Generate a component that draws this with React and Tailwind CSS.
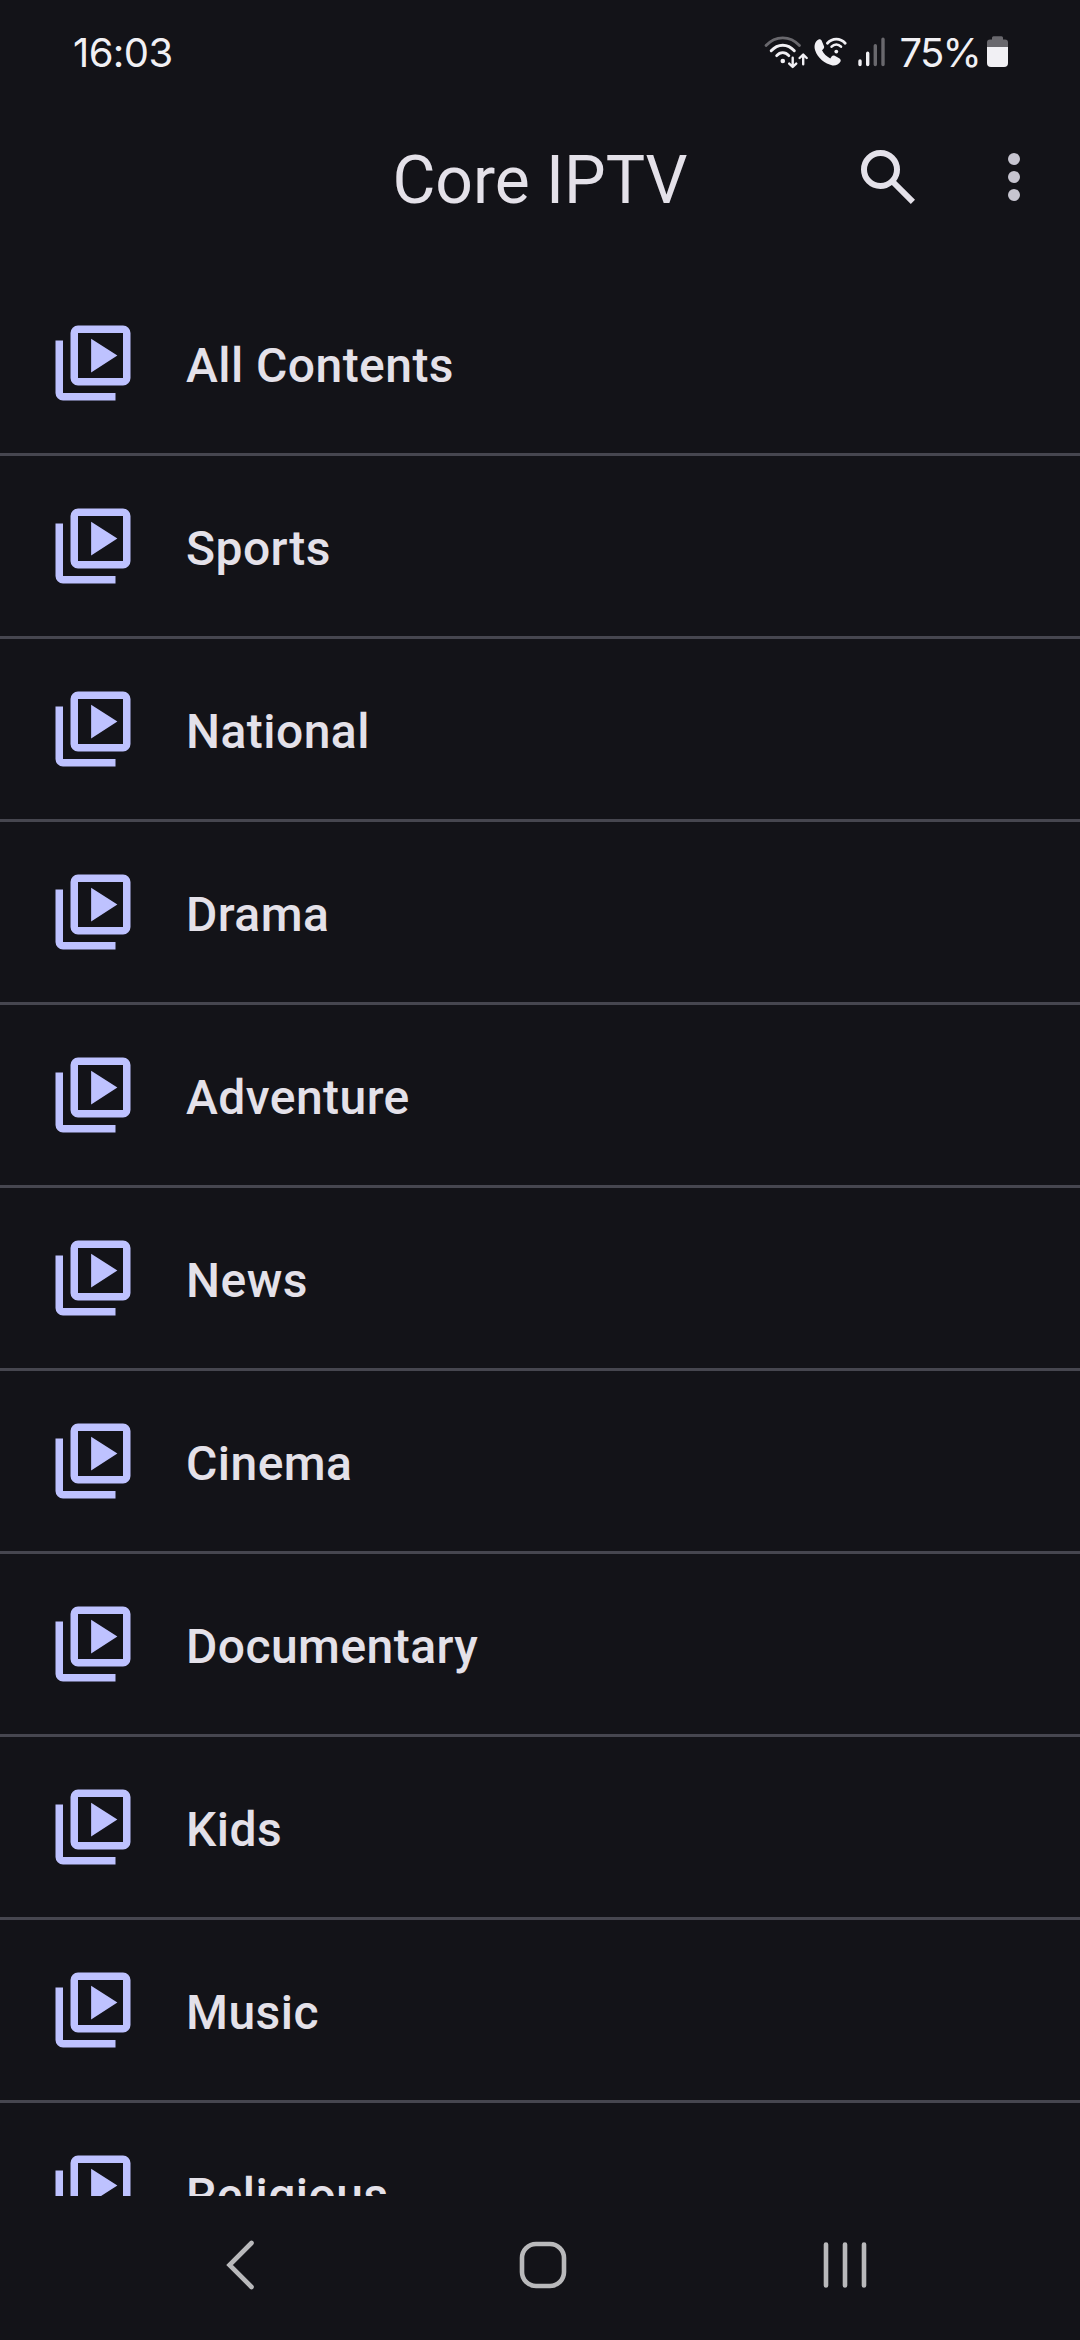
const categories = [
  "All Contents",
  "Sports",
  "National",
  "Drama",
  "Adventure",
  "News",
  "Cinema",
  "Documentary",
  "Kids",
  "Music",
  "Religious",
];

function WifiIcon() {
  return (
    <svg className="h-9 w-11" viewBox="0 0 44 36" fill="none" strokeLinecap="round">
      <path d="M2 10.5C11.5 0.2 26 0.2 35.5 10.5" stroke="#69686d" strokeWidth="2.8" />
      <path d="M7.2 15.8C13.8 8.3 23.7 8.3 30.3 15.8" stroke="#f1f0f4" strokeWidth="2.9" />
      <path d="M12.7 20.6C16.2 16.6 21.3 16.6 24.8 20.6" stroke="#f1f0f4" strokeWidth="2.9" />
      <circle cx="18.8" cy="26" r="2.3" fill="#f1f0f4" />
      <path
        d="M28.7 22.8V31.6M25.2 28.6l3.5 3.4 3.5-3.4M39.2 29.3V20.5M35.6 23l3.6-3.4 3.5 3.4"
        stroke="#f1f0f4"
        strokeWidth="2.4"
        strokeLinejoin="round"
      />
    </svg>
  );
}

function WifiCallIcon() {
  return (
    <svg className="h-9 w-9" viewBox="0 0 36 36" fill="none" strokeLinecap="round">
      <path
        d="M5.6 4.4C2 6.3.6 10.6 2.2 15.6C4.6 22.8 12 29.2 19.5 30.4C22.8 30.8 25.8 29.3 27.4 26.7C28.2 25.3 27.5 24.1 26.2 23.3L21.7 20.8C20.5 20.2 19.4 20.5 18.6 21.6L17.3 23.4C13.6 21.6 10.7 18.9 9 15.3L10.3 14.1C11.2 13.2 11.4 12.2 10.9 11.1L8.6 5.6C8 4.3 6.9 3.8 5.6 4.4Z"
        fill="#f1f0f4"
      />
      <path d="M14.4 8.2C19.3 2.7 27.3 2.7 32.2 8.2" stroke="#f1f0f4" strokeWidth="2.8" />
      <path d="M18.6 11.7C21.3 8.8 25.3 8.8 28 11.7" stroke="#f1f0f4" strokeWidth="2.6" />
      <circle cx="23.3" cy="16.6" r="1.9" fill="#f1f0f4" />
    </svg>
  );
}

function SignalIcon() {
  return (
    <svg className="h-9 w-7" viewBox="0 0 28 36" strokeWidth="3.4" strokeLinecap="round">
      <path d="M2 26v3.5M9.7 18.2v11.3" stroke="#f1f0f4" />
      <path d="M17.3 10.7v18.8M25 4.2v25.3" stroke="#69686d" />
    </svg>
  );
}

function BatteryIcon() {
  return (
    <svg className="h-9 w-[21px]" viewBox="0 0 21 36">
      <path
        d="M6.5 1.2h8q1.5 0 1.5 1.5V4.5h2q3 0 3 3V12H0V7.5q0-3 3-3h2V2.7q0-1.5 1.5-1.5z"
        fill="#69686d"
      />
      <path d="M0 12h21v16q0 4-4 4H4q-4 0-4-4z" fill="#f1f0f4" />
    </svg>
  );
}

function StatusBar() {
  return (
    <header className="flex h-[81px] items-center justify-between pr-[72px] pl-[73px] font-['Inter'] text-[40px] text-[#f1f0f4]">
      <span className="mt-[25px] leading-[48px] tracking-[-0.6px]">16:03</span>
      <div className="mt-[25px] flex items-center">
        <WifiIcon />
        <div className="ml-[5px]">
          <WifiCallIcon />
        </div>
        <div className="ml-[9px]">
          <SignalIcon />
        </div>
        <span className="mr-[7px] ml-[14px] leading-[48px] tracking-[-1.8px]">75%</span>
        <BatteryIcon />
      </div>
    </header>
  );
}

function AppBar() {
  return (
    <div className="grid h-[192px] grid-cols-[1fr_auto_1fr] items-center pr-[30px]">
      <h1 className="col-start-2 ml-[30px] pt-2 text-[66px] leading-[84px] text-[#e4e1e9]">Core IPTV</h1>
      <div className="flex items-center justify-end gap-[54px]">
        <button aria-label="Search">
          <svg className="size-[72px]" viewBox="0 -960 960 960" fill="#e4e1e9">
            <path d="M784-120 532-372q-30 24-69 38t-83 14q-109 0-184.5-75.5T120-580q0-109 75.5-184.5T380-840q109 0 184.5 75.5T640-580q0 44-14 83t-38 69l252 252-56 56ZM380-400q75 0 127.5-52.5T560-580q0-75-52.5-127.5T380-760q-75 0-127.5 52.5T200-580q0 75 52.5 127.5T380-400Z" />
          </svg>
        </button>
        <button aria-label="More options">
          <svg className="size-[72px]" viewBox="0 0 24 24" fill="#c7c5d0">
            <circle cx="12" cy="6" r="2" />
            <circle cx="12" cy="12" r="2" />
            <circle cx="12" cy="18" r="2" />
          </svg>
        </button>
      </div>
    </div>
  );
}

function CategoryRow({ name }) {
  return (
    <li className="flex h-[183px] items-center gap-12 border-b-3 border-[#46464f] px-12">
      <svg className="size-[90px] shrink-0" viewBox="0 -960 960 960" fill="#bec2ff">
        <path d="m460-380 280-180-280-180v360ZM320-240q-33 0-56.5-23.5T240-320v-480q0-33 23.5-56.5T320-880h480q33 0 56.5 23.5T880-800v480q0 33-23.5 56.5T800-240H320Zm0-80h480v-480H320v480ZM160-80q-33 0-56.5-23.5T80-160v-560h80v560h560v80H160Z" />
      </svg>
      <span className="pt-1.5 text-[48px] leading-[72px] font-medium tracking-[0.45px] text-[#e4e1e9]">
        {name}
      </span>
    </li>
  );
}

function NavBar() {
  return (
    <nav className="flex h-36 items-center justify-between pr-[205px] pb-[6px] pl-[210px]">
      <button aria-label="Back">
        <svg className="size-[60px]" viewBox="0 0 60 60" fill="none" stroke="#b9b9bb" strokeWidth="4.6" strokeLinecap="round">
          <path d="M41.5 8 19.5 30l22 22" />
        </svg>
      </button>
      <button aria-label="Home">
        <svg className="size-[60px]" viewBox="0 0 60 60" fill="none" stroke="#b9b9bb" strokeWidth="4.6">
          <rect x="9" y="9" width="42" height="42" rx="14" />
        </svg>
      </button>
      <button aria-label="Recents">
        <svg className="size-[60px]" viewBox="0 0 60 60" fill="none" stroke="#b9b9bb" strokeWidth="4.6" strokeLinecap="round">
          <path d="M11 9.5v41M30 9.5v41M49 9.5v41" />
        </svg>
      </button>
    </nav>
  );
}

export default function App() {
  return (
    <div className="flex h-[2340px] w-[1080px] flex-col overflow-hidden bg-[#131318] font-['Roboto',sans-serif]">
      <StatusBar />
      <AppBar />
      <ul className="min-h-0 flex-1 overflow-hidden">
        {categories.map((name) => (
          <CategoryRow key={name} name={name} />
        ))}
      </ul>
      <NavBar />
    </div>
  );
}
